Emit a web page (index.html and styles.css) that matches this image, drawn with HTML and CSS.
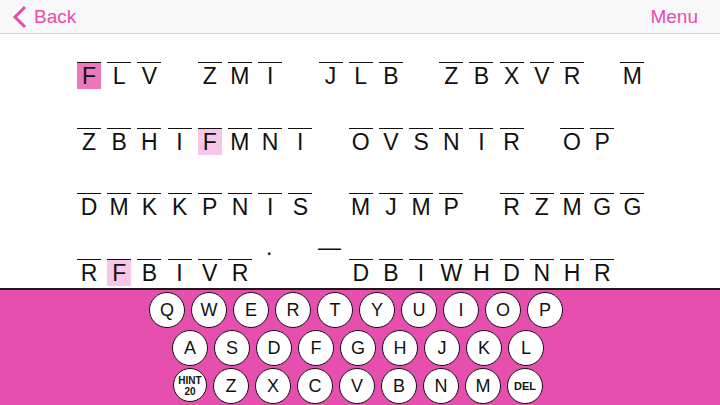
FILE: index.html
```html
<!DOCTYPE html>
<html>
<head>
<meta charset="utf-8">
<link rel="stylesheet" href="styles.css">
</head>
<body>
<div class="header">
  <div class="back">
    <svg class="chev" width="16" height="24" viewBox="0 0 16 24"><path d="M13 2 L3 12 L13 22" fill="none" stroke="#e94aae" stroke-width="3" stroke-linecap="butt" stroke-linejoin="miter"/></svg>
    <span>Back</span>
  </div>
  <div class="menu">Menu</div>
</div>
<div class="puzzle">
  <div class="row">
    <div class="cell"><div class="ans"></div><div class="ciph sel">F</div></div>
    <div class="cell"><div class="ans"></div><div class="ciph">L</div></div>
    <div class="cell"><div class="ans"></div><div class="ciph">V</div></div>
    <div class="cell space"></div>
    <div class="cell"><div class="ans"></div><div class="ciph">Z</div></div>
    <div class="cell"><div class="ans"></div><div class="ciph">M</div></div>
    <div class="cell"><div class="ans"></div><div class="ciph">I</div></div>
    <div class="cell space"></div>
    <div class="cell"><div class="ans"></div><div class="ciph">J</div></div>
    <div class="cell"><div class="ans"></div><div class="ciph">L</div></div>
    <div class="cell"><div class="ans"></div><div class="ciph">B</div></div>
    <div class="cell space"></div>
    <div class="cell"><div class="ans"></div><div class="ciph">Z</div></div>
    <div class="cell"><div class="ans"></div><div class="ciph">B</div></div>
    <div class="cell"><div class="ans"></div><div class="ciph">X</div></div>
    <div class="cell"><div class="ans"></div><div class="ciph">V</div></div>
    <div class="cell"><div class="ans"></div><div class="ciph">R</div></div>
    <div class="cell space"></div>
    <div class="cell"><div class="ans"></div><div class="ciph">M</div></div>
  </div>
  <div class="row">
    <div class="cell"><div class="ans"></div><div class="ciph">Z</div></div>
    <div class="cell"><div class="ans"></div><div class="ciph">B</div></div>
    <div class="cell"><div class="ans"></div><div class="ciph">H</div></div>
    <div class="cell"><div class="ans"></div><div class="ciph">I</div></div>
    <div class="cell"><div class="ans"></div><div class="ciph same">F</div></div>
    <div class="cell"><div class="ans"></div><div class="ciph">M</div></div>
    <div class="cell"><div class="ans"></div><div class="ciph">N</div></div>
    <div class="cell"><div class="ans"></div><div class="ciph">I</div></div>
    <div class="cell space"></div>
    <div class="cell"><div class="ans"></div><div class="ciph">O</div></div>
    <div class="cell"><div class="ans"></div><div class="ciph">V</div></div>
    <div class="cell"><div class="ans"></div><div class="ciph">S</div></div>
    <div class="cell"><div class="ans"></div><div class="ciph">N</div></div>
    <div class="cell"><div class="ans"></div><div class="ciph">I</div></div>
    <div class="cell"><div class="ans"></div><div class="ciph">R</div></div>
    <div class="cell space"></div>
    <div class="cell"><div class="ans"></div><div class="ciph">O</div></div>
    <div class="cell"><div class="ans"></div><div class="ciph">P</div></div>
  </div>
  <div class="row">
    <div class="cell"><div class="ans"></div><div class="ciph">D</div></div>
    <div class="cell"><div class="ans"></div><div class="ciph">M</div></div>
    <div class="cell"><div class="ans"></div><div class="ciph">K</div></div>
    <div class="cell"><div class="ans"></div><div class="ciph">K</div></div>
    <div class="cell"><div class="ans"></div><div class="ciph">P</div></div>
    <div class="cell"><div class="ans"></div><div class="ciph">N</div></div>
    <div class="cell"><div class="ans"></div><div class="ciph">I</div></div>
    <div class="cell"><div class="ans"></div><div class="ciph">S</div></div>
    <div class="cell space"></div>
    <div class="cell"><div class="ans"></div><div class="ciph">M</div></div>
    <div class="cell"><div class="ans"></div><div class="ciph">J</div></div>
    <div class="cell"><div class="ans"></div><div class="ciph">M</div></div>
    <div class="cell"><div class="ans"></div><div class="ciph">P</div></div>
    <div class="cell space"></div>
    <div class="cell"><div class="ans"></div><div class="ciph">R</div></div>
    <div class="cell"><div class="ans"></div><div class="ciph">Z</div></div>
    <div class="cell"><div class="ans"></div><div class="ciph">M</div></div>
    <div class="cell"><div class="ans"></div><div class="ciph">G</div></div>
    <div class="cell"><div class="ans"></div><div class="ciph">G</div></div>
  </div>
  <div class="row">
    <div class="cell"><div class="ans"></div><div class="ciph">R</div></div>
    <div class="cell"><div class="ans"></div><div class="ciph same">F</div></div>
    <div class="cell"><div class="ans"></div><div class="ciph">B</div></div>
    <div class="cell"><div class="ans"></div><div class="ciph">I</div></div>
    <div class="cell"><div class="ans"></div><div class="ciph">V</div></div>
    <div class="cell"><div class="ans"></div><div class="ciph">R</div></div>
    <div class="cell punct"><div class="ans">.</div><div class="ciph"></div></div>
    <div class="cell space"></div>
    <div class="cell punct"><div class="ans">—</div><div class="ciph"></div></div>
    <div class="cell"><div class="ans"></div><div class="ciph">D</div></div>
    <div class="cell"><div class="ans"></div><div class="ciph">B</div></div>
    <div class="cell"><div class="ans"></div><div class="ciph">I</div></div>
    <div class="cell"><div class="ans"></div><div class="ciph">W</div></div>
    <div class="cell"><div class="ans"></div><div class="ciph">H</div></div>
    <div class="cell"><div class="ans"></div><div class="ciph">D</div></div>
    <div class="cell"><div class="ans"></div><div class="ciph">N</div></div>
    <div class="cell"><div class="ans"></div><div class="ciph">H</div></div>
    <div class="cell"><div class="ans"></div><div class="ciph">R</div></div>
  </div>
</div>
<div class="keyboard">
  <div class="krow r1">
    <div class="key">Q</div><div class="key">W</div><div class="key">E</div><div class="key">R</div><div class="key">T</div><div class="key">Y</div><div class="key">U</div><div class="key">I</div><div class="key">O</div><div class="key">P</div>
  </div>
  <div class="krow r2">
    <div class="key">A</div><div class="key">S</div><div class="key">D</div><div class="key">F</div><div class="key">G</div><div class="key">H</div><div class="key">J</div><div class="key">K</div><div class="key">L</div>
  </div>
  <div class="krow r2">
    <div class="key hint"><span>HINT</span><span>20</span></div><div class="key">Z</div><div class="key">X</div><div class="key">C</div><div class="key">V</div><div class="key">B</div><div class="key">N</div><div class="key">M</div><div class="key del">DEL</div>
  </div>
</div>
</body>
</html>
```
FILE: styles.css
```css
html, body {
  margin: 0;
  padding: 0;
  background: #ffffff;
  width: 720px;
  height: 405px;
  overflow: hidden;
  font-family: "Liberation Sans", Arial, sans-serif;
}
.header {
  height: 33px;
  background: #f8f8f8;
  border-bottom: 1px solid #d4d4d4;
  display: flex;
  align-items: center;
  justify-content: space-between;
  color: #e94aae;
  font-size: 19px;
}
.back {
  display: flex;
  align-items: center;
  padding-left: 12px;
  gap: 6px;
}
.chev {
  display: block;
}
.menu {
  padding-right: 22px;
}
.puzzle {
  height: 254px;
  padding-left: 77px;
  display: flex;
  flex-direction: column;
  gap: 10.5px;
}
.row {
  display: flex;
  gap: 6.2px;
}
.cell {
  width: 24px;
  display: flex;
  flex-direction: column;
  font-size: 23px;
  color: #111;
}
.ans {
  height: 28px;
  display: flex;
  align-items: flex-end;
  justify-content: center;
  line-height: 23px;
}
.punct .ans {
  margin-left: -2px;
}
.ciph {
  height: 26px;
  border-top: 1px solid #111;
  text-align: center;
  line-height: 26px;
}
.space .ciph, .punct .ciph {
  border-top: none;
}
.space {
  height: 55px;
}
.ciph.sel {
  background: #eb78bf;
}
.ciph.same {
  background: #f8c6e6;
}
.keyboard {
  height: 113px;
  border-top: 2px solid #1a1a1a;
  background: #e64fae;
  padding-top: 2px;
  padding-right: 8px;
  display: flex;
  flex-direction: column;
  align-items: center;
  gap: 2px;
}
.krow {
  display: flex;
  gap: 6px;
}
.krow.r2 {
  padding-left: 4px;
}
.key {
  width: 34px;
  height: 34px;
  border: 1px solid #111;
  border-radius: 50%;
  background: #ffffff;
  display: flex;
  align-items: center;
  justify-content: center;
  font-size: 18px;
  color: #111;
}
.hint {
  flex-direction: column;
  font-size: 10px;
  font-weight: bold;
  line-height: 11px;
  padding-top: 1px;
  box-sizing: border-box;
}
.del {
  font-size: 11px;
  font-weight: bold;
}
```
